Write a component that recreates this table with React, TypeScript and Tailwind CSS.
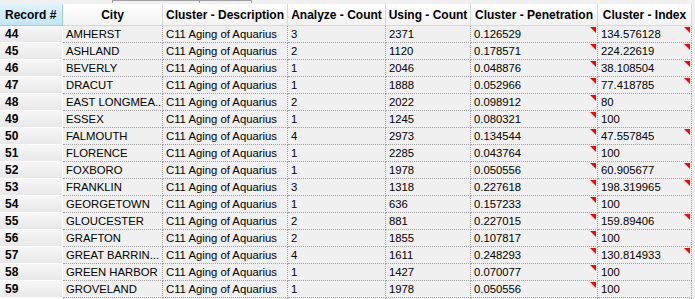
const ROWS = [
  { id: "44", city: "AMHERST", desc: "C11 Aging of Aquarius", analyze: "3", using: "2371", pen: "0.126529", index: "134.576128", note: true },
  { id: "45", city: "ASHLAND", desc: "C11 Aging of Aquarius", analyze: "2", using: "1120", pen: "0.178571", index: "224.22619", note: true },
  { id: "46", city: "BEVERLY", desc: "C11 Aging of Aquarius", analyze: "1", using: "2046", pen: "0.048876", index: "38.108504", note: true },
  { id: "47", city: "DRACUT", desc: "C11 Aging of Aquarius", analyze: "1", using: "1888", pen: "0.052966", index: "77.418785", note: true },
  { id: "48", city: "EAST LONGMEA...", desc: "C11 Aging of Aquarius", analyze: "2", using: "2022", pen: "0.098912", index: "80", note: false },
  { id: "49", city: "ESSEX", desc: "C11 Aging of Aquarius", analyze: "1", using: "1245", pen: "0.080321", index: "100", note: false },
  { id: "50", city: "FALMOUTH", desc: "C11 Aging of Aquarius", analyze: "4", using: "2973", pen: "0.134544", index: "47.557845", note: true },
  { id: "51", city: "FLORENCE", desc: "C11 Aging of Aquarius", analyze: "1", using: "2285", pen: "0.043764", index: "100", note: false },
  { id: "52", city: "FOXBORO", desc: "C11 Aging of Aquarius", analyze: "1", using: "1978", pen: "0.050556", index: "60.905677", note: true },
  { id: "53", city: "FRANKLIN", desc: "C11 Aging of Aquarius", analyze: "3", using: "1318", pen: "0.227618", index: "198.319965", note: true },
  { id: "54", city: "GEORGETOWN", desc: "C11 Aging of Aquarius", analyze: "1", using: "636", pen: "0.157233", index: "100", note: false },
  { id: "55", city: "GLOUCESTER", desc: "C11 Aging of Aquarius", analyze: "2", using: "881", pen: "0.227015", index: "159.89406", note: true },
  { id: "56", city: "GRAFTON", desc: "C11 Aging of Aquarius", analyze: "2", using: "1855", pen: "0.107817", index: "100", note: false },
  { id: "57", city: "GREAT BARRIN...", desc: "C11 Aging of Aquarius", analyze: "4", using: "1611", pen: "0.248293", index: "130.814933", note: true },
  { id: "58", city: "GREEN HARBOR", desc: "C11 Aging of Aquarius", analyze: "1", using: "1427", pen: "0.070077", index: "100", note: false },
  { id: "59", city: "GROVELAND", desc: "C11 Aging of Aquarius", analyze: "1", using: "1978", pen: "0.050556", index: "100", note: false },
  // next row, only its top edge shows
  { id: "", city: "", desc: "", analyze: "", using: "", pen: "", index: "", note: true },
];

const HEADERS = [
  { label: "City", w: "w-[100px]" },
  { label: "Cluster - Description", w: "w-[125px]" },
  { label: "Analyze - Count", w: "w-[98px]" },
  { label: "Using - Count", w: "w-[85px]" },
  { label: "Cluster - Penetration", w: "w-[127px]" },
  { label: "Cluster - Index", w: "w-[94px]" },
];

function Note() {
  return (
    <span className="absolute right-[1px] top-[1px] h-[6px] w-[6px] bg-[#ff0000] [clip-path:polygon(0_0,100%_0,100%_100%)]" />
  );
}

function Cell({ w, children, note }: { w: string; children: React.ReactNode; note?: boolean }) {
  return (
    <div
      className={`relative ${w} shrink-0 overflow-hidden whitespace-nowrap border-r border-b border-dotted border-[#a0a0a0] pl-[3px] leading-[16px]`}
    >
      {children}
      {note && <Note />}
    </div>
  );
}

export default function App() {
  return (
    <div className="h-[299px] w-[695px] overflow-hidden bg-[#f0f0f0] font-['Liberation_Sans',Tahoma,sans-serif] text-[11.3px] text-black">
      <div className="flex h-[4px]">
        <div className="w-[112px]" />
        <div className="h-[3px] w-[87px] border-l border-t border-[#a0a0a0]" />
        <div className="h-[3px] w-[53px] border-l border-r border-t border-[#a0a0a0]" />
      </div>

      <div className="flex h-[22px]">
        <div className="flex w-[63px] shrink-0 items-center border-r border-b border-[#9fcfe8] bg-gradient-to-b from-[#ddf3fd] to-[#c2e6f7] pl-[5px] text-[12px] font-bold">
          Record #
        </div>
        {HEADERS.map((h) => (
          <div
            key={h.label}
            className={`flex ${h.w} shrink-0 items-center justify-center border-r border-b border-[#d8d8d8] bg-gradient-to-b from-white to-[#f2f2f2] text-[12px] font-bold whitespace-nowrap`}
          >
            {h.label}
          </div>
        ))}
      </div>

      {ROWS.map((r, i) => (
        <div key={i} className="flex h-[17px]">
          <div className="w-[63px] shrink-0 border-r border-b border-white bg-gradient-to-b from-[#f7f7f7] to-[#e8e8e8] pl-[5px] text-[12px] leading-[16px] font-bold">
            {r.id}
          </div>
          <Cell w="w-[100px]">{r.city}</Cell>
          <Cell w="w-[125px]">{r.desc}</Cell>
          <Cell w="w-[98px]">{r.analyze}</Cell>
          <Cell w="w-[85px]">{r.using}</Cell>
          <Cell w="w-[127px]" note>
            {r.pen}
          </Cell>
          <Cell w="w-[94px]" note={r.note}>
            {r.index}
          </Cell>
        </div>
      ))}
    </div>
  );
}
